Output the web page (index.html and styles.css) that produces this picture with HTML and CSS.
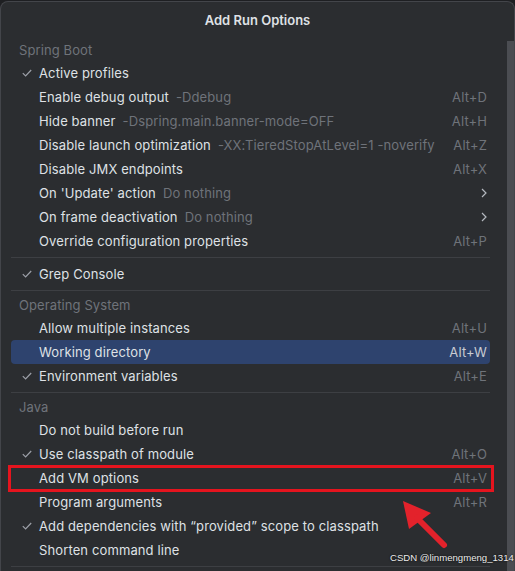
FILE: index.html
```html
<!DOCTYPE html>
<html lang="en">
<head>
  <meta charset="UTF-8">
  <title>Add Run Options</title>
  <link rel="stylesheet" href="styles.css">
</head>
<body>
  <div class="popup">
    <div class="title">Add Run Options</div>

    <div class="content">
      <div class="list">
        <div class="group">Spring Boot</div>
        <div class="item"><span class="check"><svg width="10" height="8" viewBox="0 0 10 8"><path d="M0.8 4.2 L3.6 7 L9.2 1" fill="none" stroke="#9da0a8" stroke-width="1.2"/></svg></span><span class="name">Active profiles</span></div>
        <div class="item"><span class="check"></span><span class="name">Enable debug output</span><span class="hint">-Ddebug</span><span class="key">Alt+D</span></div>
        <div class="item"><span class="check"></span><span class="name">Hide banner</span><span class="hint">-Dspring.main.banner-mode=OFF</span><span class="key">Alt+H</span></div>
        <div class="item"><span class="check"></span><span class="name">Disable launch optimization</span><span class="hint">-XX:TieredStopAtLevel=1 -noverify</span><span class="key">Alt+Z</span></div>
        <div class="item"><span class="check"></span><span class="name">Disable JMX endpoints</span><span class="key">Alt+X</span></div>
        <div class="item"><span class="check"></span><span class="name">On 'Update' action</span><span class="hint">Do nothing</span><span class="key"><svg width="6" height="10" viewBox="0 0 6 10"><path d="M1 1 L5 5 L1 9" fill="none" stroke="#b4b8bf" stroke-width="1.2"/></svg></span></div>
        <div class="item"><span class="check"></span><span class="name">On frame deactivation</span><span class="hint">Do nothing</span><span class="key"><svg width="6" height="10" viewBox="0 0 6 10"><path d="M1 1 L5 5 L1 9" fill="none" stroke="#b4b8bf" stroke-width="1.2"/></svg></span></div>
        <div class="item"><span class="check"></span><span class="name">Override configuration properties</span><span class="key">Alt+P</span></div>
        <div class="sep"></div>
        <div class="item"><span class="check"><svg width="10" height="8" viewBox="0 0 10 8"><path d="M0.8 4.2 L3.6 7 L9.2 1" fill="none" stroke="#9da0a8" stroke-width="1.2"/></svg></span><span class="name">Grep Console</span></div>
        <div class="sep"></div>

        <div class="group">Operating System</div>
        <div class="item"><span class="check"></span><span class="name">Allow multiple instances</span><span class="key">Alt+U</span></div>
        <div class="item selected"><span class="check"></span><span class="name">Working directory</span><span class="key">Alt+W</span></div>
        <div class="item"><span class="check"><svg width="10" height="8" viewBox="0 0 10 8"><path d="M0.8 4.2 L3.6 7 L9.2 1" fill="none" stroke="#9da0a8" stroke-width="1.2"/></svg></span><span class="name">Environment variables</span><span class="key">Alt+E</span></div>
        <div class="sep"></div>

        <div class="group">Java</div>
        <div class="item"><span class="check"></span><span class="name">Do not build before run</span></div>
        <div class="item"><span class="check"><svg width="10" height="8" viewBox="0 0 10 8"><path d="M0.8 4.2 L3.6 7 L9.2 1" fill="none" stroke="#9da0a8" stroke-width="1.2"/></svg></span><span class="name">Use classpath of module</span><span class="key">Alt+O</span></div>
        <div class="item"><span class="check"></span><span class="name">Add VM options</span><span class="key">Alt+V</span></div>
        <div class="item"><span class="check"></span><span class="name">Program arguments</span><span class="key">Alt+R</span></div>
        <div class="item"><span class="check"><svg width="10" height="8" viewBox="0 0 10 8"><path d="M0.8 4.2 L3.6 7 L9.2 1" fill="none" stroke="#9da0a8" stroke-width="1.2"/></svg></span><span class="name">Add dependencies with “provided” scope to classpath</span></div>
        <div class="item"><span class="check"></span><span class="name">Shorten command line</span></div>
        <div class="sep"></div>
      </div>
      <div class="scrollbar"></div>
    </div>

    <!-- annotation over the screenshot -->
    <div class="mark"></div>
    <svg class="arrow" width="56" height="56" viewBox="0 0 56 56">
      <polygon points="8,5 14,33 36,17" fill="#e3222b"/>
      <line x1="22" y1="22" x2="49" y2="49" stroke="#e3222b" stroke-width="6" stroke-linecap="round"/>
    </svg>
  </div>
  <div class="watermark">CSDN @linmengmeng_1314</div>
</body>
</html>
```

FILE: styles.css
```css
body {
  position: relative;
  margin: 0;
  background-color: #1e1f22;
  font-family: Inter, "Noto Sans", sans-serif;
  font-size: 13px;
  color: #dfe1e5;
}
.popup {
  position: relative;
  margin-top: 1px;
  height: 570px;
  box-sizing: border-box;
  background-color: #2b2d30;
  border: 1px solid #43454a;
  border-bottom: none;
  border-radius: 8px 8px 0 0;
  overflow: hidden;
}
.title {
  height: 38px;
  line-height: 37px;
  text-align: center;
  font-weight: 600;
  color: #dfe1e5;
}
.content {
  display: flex;
}
.list {
  flex: 1;
  padding: 0 17px 0 10px;
}
.scrollbar {
  width: 7px;
  height: 540px;
  margin-top: 1px;
  background-color: #4b4d52;
}
.group {
  height: 21px;
  line-height: 21px;
  padding-left: 8px;
  color: #6f737a;
  letter-spacing: 0.1px;
}
.item {
  display: flex;
  align-items: center;
  height: 24px;
  padding: 0 3px 0 11px;
  border-radius: 4px;
  white-space: nowrap;
  letter-spacing: 0.12px;
}
.item.selected {
  background-color: #2e436e;
}
.check {
  width: 17px;
  display: flex;
  align-items: center;
  flex: none;
}
.hint {
  margin-left: 7px;
  color: #6f737a;
}
.key {
  margin-left: auto;
  padding-left: 10px;
  color: #6f737a;
  display: flex;
  align-items: center;
}
.selected .key {
  color: #c9ccd3;
}
.sep {
  height: 1px;
  margin: 4px 0;
  background-color: #3d3f43;
}
.mark {
  position: absolute;
  left: 7px;
  top: 463px;
  width: 480px;
  height: 21px;
  border: 3px solid #e5141e;
}
.arrow {
  position: absolute;
  left: 394px;
  top: 494px;
}
.watermark {
  position: absolute;
  left: 390px;
  top: 552px;
  white-space: nowrap;
  font-family: "Liberation Sans", Arial, sans-serif;
  font-size: 9.6px;
  color: #ececec;
  text-shadow: 0 0 2px #000;
}
```
